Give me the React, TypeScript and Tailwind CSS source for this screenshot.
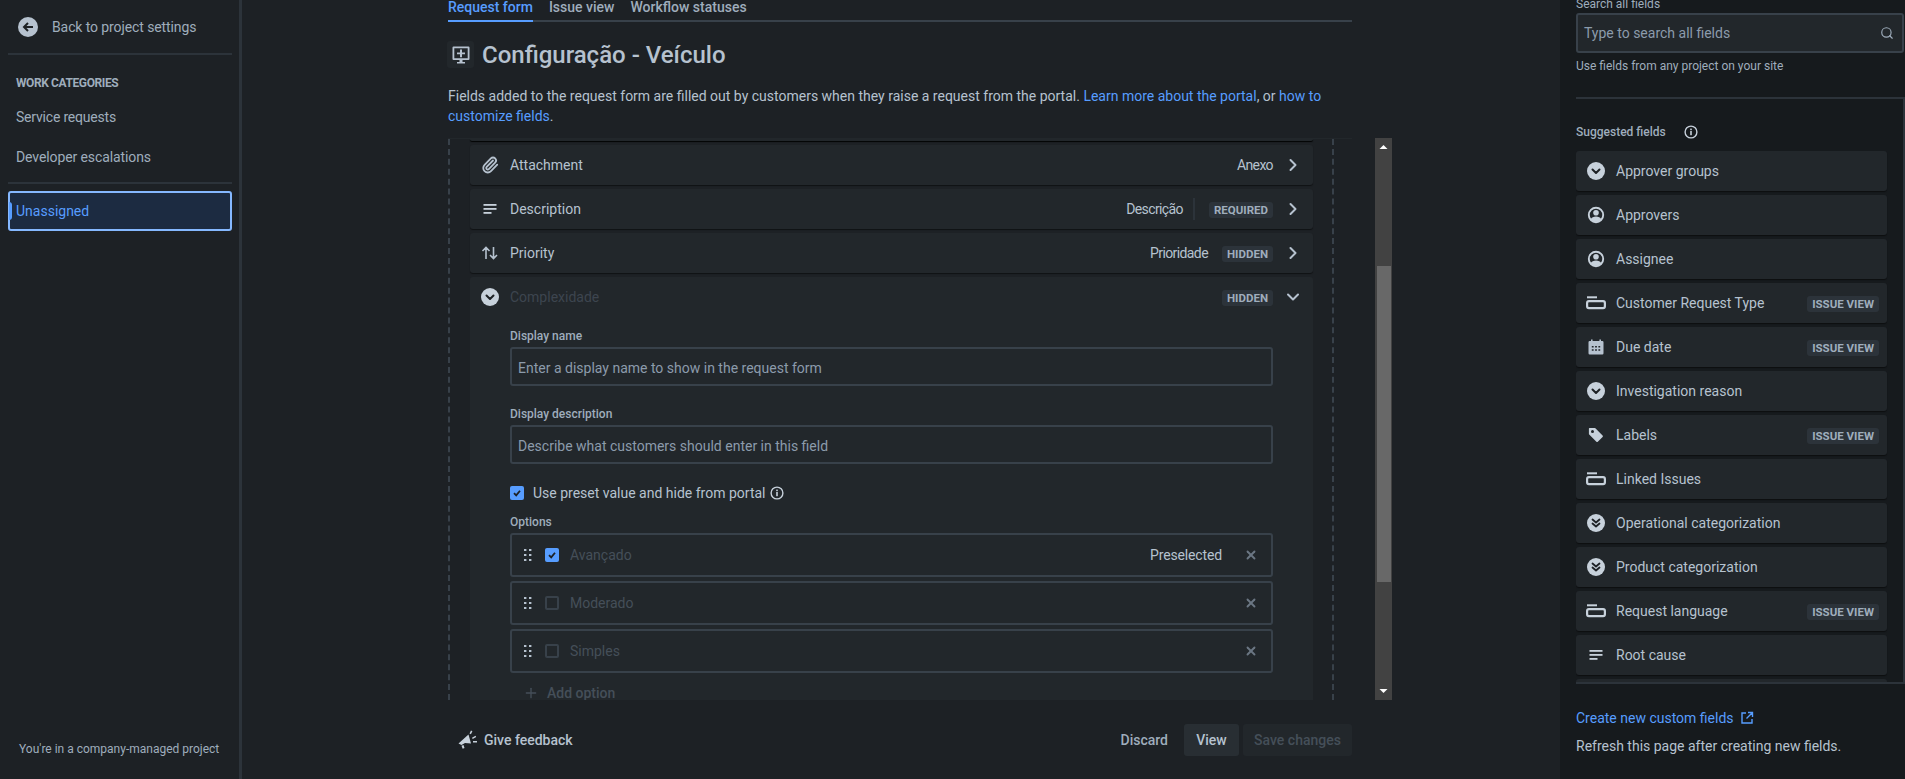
import { ReactNode } from "react";
import { ChevronDown, ChevronRight, Paperclip, Plus, Search, X } from "lucide-react";

function DropdownIcon({ double }: { double?: boolean }) {
  return (
    <svg width="20" height="20" viewBox="0 0 20 20" className="shrink-0">
      <circle cx="10" cy="10" r="9" fill="#c7d1db" />
      {double ? (
        <path d="M6.5 6.5 10 9.5l3.5-3M6.5 10.5 10 13.5l3.5-3" fill="none" stroke="#1d2125" strokeWidth="1.8" strokeLinecap="round" strokeLinejoin="round" />
      ) : (
        <path d="M6.5 8.5 10 12l3.5-3.5" fill="none" stroke="#1d2125" strokeWidth="2" strokeLinecap="round" strokeLinejoin="round" />
      )}
    </svg>
  );
}

function PersonIcon() {
  return (
    <svg width="20" height="20" viewBox="0 0 20 20" className="shrink-0">
      <circle cx="10" cy="10" r="7.2" fill="none" stroke="#c7d1db" strokeWidth="1.9" />
      <circle cx="10" cy="7.8" r="2.8" fill="#c7d1db" />
      <path d="M4.600 14.600c1-2.200 3-3 5.400-3s4.400.800 5.400 3a7.200 7.200 0 0 1-10.800 0z" fill="#c7d1db" />
    </svg>
  );
}

function ShortTextIcon() {
  return (
    <svg width="20" height="14" viewBox="0 0 20 14" className="shrink-0">
      <rect x="1" y="0.3" width="10" height="2" fill="#c7d1db" />
      <rect x="1.100" y="5.100" width="17.800" height="7" rx="1.800" fill="none" stroke="#c7d1db" strokeWidth="2.200" />
    </svg>
  );
}

function CalendarIcon() {
  return (
    <svg width="16" height="16" viewBox="0 0 16 16" className="shrink-0">
      <path fillRule="evenodd" d="M.5 3.200A1.200 1.200 0 0 1 1.700 2H3V.5h1.600V2h6.800V.5H13V2h1.300a1.200 1.200 0 0 1 1.200 1.200v11.100a1.200 1.200 0 0 1-1.200 1.200H1.700a1.200 1.200 0 0 1-1.200-1.200zM3.800 7v1.500h1.800V7zm3.300 0v1.500h1.800V7zm3.300 0v1.500h1.800V7zM3.800 10.300v1.500h1.800v-1.500zm3.300 0v1.500h1.800v-1.500zm3.300 0v1.500h1.800v-1.500z" fill="#b6c2cf" />
    </svg>
  );
}

function TagIcon() {
  return (
    <svg width="16" height="16" viewBox="0 0 16 16" className="shrink-0">
      <path fillRule="evenodd" d="M1.500 1h5.200a1 1 0 0 1 .700.300l7.200 7.200a1 1 0 0 1 0 1.400l-4.800 4.800a1 1 0 0 1-1.400 0L1.200 7.500a1 1 0 0 1-.300-.700V1.600A.600.600 0 0 1 1.500 1zM4.500 3a1.500 1.500 0 1 0 0 3 1.500 1.500 0 0 0 0-3z" fill="#c7d1db" />
    </svg>
  );
}

function LinesIcon() {
  return (
    <svg width="16" height="12" viewBox="0 0 16 12" className="shrink-0">
      <rect x="1.500" y="1" width="13" height="1.800" fill="#c7d1db" />
      <rect x="1.500" y="5" width="13" height="1.800" fill="#c7d1db" />
      <rect x="1.500" y="9" width="8" height="1.800" fill="#c7d1db" />
    </svg>
  );
}

function PriorityIcon() {
  return (
    <svg width="18" height="14" viewBox="0 0 18 14" className="shrink-0">
      <path d="M5 13V2M1.500 5 5 1.500 8.500 5M12.500 1v11M9 9l3.500 3.500L16 9" fill="none" stroke="#b6c2cf" strokeWidth="1.600" />
    </svg>
  );
}

function InfoIcon({ size = 14 }: { size?: number }) {
  return (
    <svg width={size} height={size} viewBox="0 0 14 14" className="shrink-0">
      <circle cx="7" cy="7" r="5.900" fill="none" stroke="#c7d1db" strokeWidth="1.400" />
      <rect x="6.200" y="6" width="1.600" height="4.200" fill="#c7d1db" />
      <rect x="6.200" y="3.600" width="1.600" height="1.600" fill="#c7d1db" />
    </svg>
  );
}

function Tag({ children }: { children: ReactNode }) {
  return (
    <span className="flex h-4 translate-y-px items-center rounded-[3px] bg-[#2c333a] px-[5px] text-[11.5px] font-bold uppercase text-[#9fadbc]">
      {children}
    </span>
  );
}

function Checkbox({ checked }: { checked?: boolean }) {
  return checked ? (
    <span className="flex h-[14px] w-[14px] shrink-0 items-center justify-center rounded-[2px] bg-[#579dff]">
      <svg width="10" height="10" viewBox="0 0 10 10">
        <path d="M2 5.200 4.200 7.400 8 2.800" fill="none" stroke="#1d2125" strokeWidth="1.800" />
      </svg>
    </span>
  ) : (
    <span className="block h-[14px] w-[14px] shrink-0 rounded-[2px] border-2 border-[#38414a]" />
  );
}

function DragDots() {
  return (
    <svg width="8" height="12" viewBox="0 0 8 12" className="shrink-0">
      {[0, 5, 10].map((y) => (
        <g key={y} fill="#b6c2cf">
          <rect x="0" y={y} width="2.400" height="2" />
          <rect x="5" y={y} width="2.400" height="2" />
        </g>
      ))}
    </svg>
  );
}

function FieldRow({ icon, name, value, tag, sep }: { icon: ReactNode; name: string; value?: string; tag?: string; sep?: boolean }) {
  return (
    <div className="flex h-10 items-center rounded-[3px] bg-[#22272b] shadow-[0_1px_1px_#03040480]">
      <div className="flex w-10 shrink-0 justify-center">{icon}</div>
      <span className="text-[#b6c2cf]">{name}</span>
      <div className="ml-auto flex items-center">
        {value && <span className="tracking-[-0.6px] text-[#b6c2cf]">{value}</span>}
        {sep && <span className="mx-[10px] h-[22px] w-[2px] bg-[#2c333a]" />}
        {tag && <span className={sep ? "ml-[4px]" : "ml-[14px]"}><Tag>{tag}</Tag></span>}
      </div>
      <div className="flex w-10 shrink-0 justify-center">
        <ChevronRight size={20} color="#b6c2cf" strokeWidth={2.4} />
      </div>
    </div>
  );
}

function OptionRow({ name, checked }: { name: string; checked?: boolean }) {
  return (
    <div className="flex h-11 items-center rounded-[3px] border-2 border-[#38414a] pl-[12px] pr-[13px]">
      <DragDots />
      <span className="ml-[13px]"><Checkbox checked={checked} /></span>
      <span className="ml-[11px] text-[#454f59]">{name}</span>
      {checked && <span className="ml-auto tracking-[-0.15px] text-[#b6c2cf]">Preselected</span>}
      <X size={14} color="#6b7683" strokeWidth={3.2} className={checked ? "ml-[22px]" : "ml-auto"} />
    </div>
  );
}

const suggested = [
  { name: "Approver groups", icon: <DropdownIcon /> },
  { name: "Approvers", icon: <PersonIcon /> },
  { name: "Assignee", icon: <PersonIcon /> },
  { name: "Customer Request Type", icon: <ShortTextIcon />, tag: true },
  { name: "Due date", icon: <CalendarIcon />, tag: true },
  { name: "Investigation reason", icon: <DropdownIcon /> },
  { name: "Labels", icon: <TagIcon />, tag: true },
  { name: "Linked Issues", icon: <ShortTextIcon /> },
  { name: "Operational categorization", icon: <DropdownIcon double /> },
  { name: "Product categorization", icon: <DropdownIcon double /> },
  { name: "Request language", icon: <ShortTextIcon />, tag: true },
  { name: "Root cause", icon: <LinesIcon /> },
];

export default function App() {
  return (
    <div className="flex h-screen w-full overflow-hidden bg-[#1d2125] font-['Roboto',sans-serif] text-sm text-[#b6c2cf]">
      {/* left nav */}
      <aside className="flex w-[242px] shrink-0 flex-col border-r-[3px] border-[#2c333a] pl-2 pr-[7px] text-[#9fadbc]">
        <div className="flex h-[53px] items-center gap-[14px] pl-[10px]">
          <svg width="20" height="20" viewBox="0 0 20 20">
            <circle cx="10" cy="10" r="10" fill="#b6c2cf" />
            <path d="M15 10H6.500M10 6 6 10l4 4" fill="none" stroke="#1d2125" strokeWidth="2" />
          </svg>
          <span className="tracking-[-0.1px]">Back to project settings</span>
        </div>
        <div className="h-[2px] bg-[#2c333a]" />
        <div className="pb-[6px] pl-2 pt-[20px] text-[12px] font-bold uppercase leading-4 tracking-[-0.4px] text-[#9fadbc]">Work categories</div>
        <div className="flex h-10 items-center pl-2 tracking-[-0.2px]">Service requests</div>
        <div className="flex h-10 items-center pl-2 tracking-[-0.1px]">Developer escalations</div>
        <div className="mt-[5px] h-[2px] bg-[#2c333a]" />
        <div className="relative mt-[7px] flex h-10 items-center rounded-[3px] border-2 border-[#85b8ff] bg-[#1c2b41] pl-[6px] text-[#579dff]">
          Unassigned
          <span className="absolute left-[-1px] top-[9px] h-[18px] w-[3px] rounded-r-sm bg-[#579dff]" />
        </div>
        <div className="mt-auto pb-[22px] pl-[11px] text-xs leading-4">You're in a company-managed project</div>
      </aside>

      {/* main column */}
      <main className="flex-1 overflow-hidden pl-[206px]">
        <div className="-mt-[3px] w-[904px]">
          <div className="flex gap-4 border-b-2 border-[#38414a] font-medium text-[#9fadbc]">
            <span className="-mb-[2px] border-b-2 border-[#579dff] pb-[3px] text-[#579dff]">Request form</span>
            <span className="pb-[3px]">Issue view</span>
            <span className="pb-[3px]">Workflow statuses</span>
          </div>
          <div className="-ml-px mt-[19px] flex h-[27px] items-center gap-2">
            <span className="flex h-[27px] w-[27px] items-center justify-center rounded-[3px] bg-[#22272b]">
              <svg width="20" height="20" viewBox="0 0 20 20">
                <path fillRule="evenodd" d="M2.500 1.500h15a1 1 0 0 1 1 1v11.500a1 1 0 0 1-1 1h-15a1 1 0 0 1-1-1V2.500a1 1 0 0 1 1-1zm.8 1.800v10h13.400v-10zM9 4.500h2V7.500h3v1.800h-3v3H9v-3H6V7.500h3zM8.500 15h3v2h2.500v1.500H6V17h2.500z" fill="#b6c2cf" />
              </svg>
            </span>
            <h1 className="text-2xl font-medium text-[#b6c2cf]">Configuração - Veículo</h1>
          </div>
          <p className="mt-[18px] leading-5 text-[#b6c2cf]">
            Fields added to the request form are filled out by customers when they raise a request from the portal.{" "}
            <span className="text-[#579dff]">Learn more about the portal</span>, or <span className="text-[#579dff]">how to</span>
            <br />
            <span className="text-[#579dff]">customize fields</span>.
          </p>
        </div>

        <div className="mt-3 flex h-[562px] w-[944px]">
          <div className="h-full w-[904px] overflow-hidden border-t border-[#22272b]">
            <div className="h-full w-[886px] border-x-2 border-dashed border-[#38414a] pl-5 pr-[19px]">
              <div className="h-[2px] rounded-b-[3px] bg-[#22272b] shadow-[0_1px_1px_#030404]" />
              <div className="mt-[4px] flex flex-col gap-1">
                <FieldRow icon={<Paperclip size={18} color="#b6c2cf" strokeWidth={2.4} />} name="Attachment" value="Anexo" />
                <FieldRow icon={<LinesIcon />} name="Description" value="Descrição" tag="Required" sep />
                <FieldRow icon={<PriorityIcon />} name="Priority" value="Prioridade" tag="Hidden" />
                <div className="rounded-[3px] bg-[#22272b] pb-10">
                  <div className="flex h-10 items-center">
                    <div className="flex w-10 shrink-0 justify-center"><DropdownIcon /></div>
                    <span className="text-[#3d454f]">Complexidade</span>
                    <div className="ml-auto"><Tag>Hidden</Tag></div>
                    <div className="flex w-10 shrink-0 justify-center">
                      <ChevronDown size={20} color="#b6c2cf" strokeWidth={2.4} />
                    </div>
                  </div>
                  <div className="px-10">
                    <div className="mt-[11px] text-xs font-medium leading-4 text-[#9fadbc]">Display name</div>
                    <div className="mt-[3px] flex h-[39px] items-center rounded-[3px] border-2 border-[#38414a] px-[6px] pt-[2px] text-[#8c9bab]">
                      Enter a display name to show in the request form
                    </div>
                    <div className="mt-[20px] text-xs font-medium leading-4 text-[#9fadbc]">Display description</div>
                    <div className="mt-[3px] flex h-[39px] items-center rounded-[3px] border-2 border-[#38414a] px-[6px] pt-[2px] text-[#8c9bab]">
                      Describe what customers should enter in this field
                    </div>
                    <div className="mt-[19px] flex h-5 items-center">
                      <Checkbox checked />
                      <span className="ml-[9px]">Use preset value and hide from portal</span>
                      <span className="ml-[5px]"><InfoIcon /></span>
                    </div>
                    <div className="mt-[11px] text-xs font-medium leading-4 text-[#9fadbc]">Options</div>
                    <div className="mt-[3px] flex flex-col gap-1">
                      <OptionRow name="Avançado" checked />
                      <OptionRow name="Moderado" />
                      <OptionRow name="Simples" />
                    </div>
                    <div className="mt-[10px] flex h-5 items-center gap-[8px] pl-[13px] font-medium text-[#454f59]">
                      <Plus size={16} color="#454f59" strokeWidth={2} />
                      Add option
                    </div>
                  </div>
                </div>
              </div>
            </div>
          </div>
          {/* scrollbar */}
          <div className="ml-[23px] flex h-full w-[17px] flex-col items-center bg-[#424242]">
            <svg width="17" height="17" viewBox="0 0 17 17" className="shrink-0">
              <path d="M4.500 11 8.500 7l4 4z" fill="#fff" />
            </svg>
            <div className="mt-[111px] h-[316px] w-[14px] bg-[#686868]" />
            <svg width="17" height="17" viewBox="0 0 17 17" className="mt-auto shrink-0">
              <path d="M4.500 6 8.500 10l4-4z" fill="#fff" />
            </svg>
          </div>
        </div>

        <div className="mt-6 flex h-8 w-[904px] items-center font-medium">
          <div className="flex items-center gap-[6px] pl-[10px]">
            <svg width="20" height="20" viewBox="0 0 20 20">
              <path d="M.5 13.500 10.500 4.500 13 13.500l-6-.5-3.500 2zM3.500 15.800l2-.8 1 3-1.800.7zM11.500 3.500l1.500-3 1.400.7-1.500 3zM14 7.800l3.500-2 .7 1.300-3.500 2zM15 11h4v1.500h-4z" fill="#c7d1db" />
            </svg>
            <span>Give feedback</span>
          </div>
          <span className="ml-auto text-[#9fadbc]">Discard</span>
          <span className="ml-4 flex h-8 w-[55px] items-center justify-center rounded-[3px] bg-[#282e33]">View</span>
          <span className="ml-1 flex h-8 w-[109px] items-center justify-center rounded-[3px] bg-[#22272b] text-[#454f59]">Save changes</span>
        </div>
      </main>

      {/* field library */}
      <aside className="w-[345px] shrink-0 overflow-hidden bg-[#161a1d] pl-4">
        <div className="-mt-[4px] text-xs leading-4 text-[#9fadbc]">Search all fields</div>
        <div className="mt-[1px] flex h-10 w-[328px] items-center justify-between rounded-[3px] border-2 border-[#38414a] bg-[#22272b] pl-[6px] pr-[8px] text-[#8c9bab]">
          Type to search all fields
          <Search size={14} color="#9fadbc" strokeWidth={2} />
        </div>
        <div className="mt-[5px] text-xs leading-4 text-[#9fadbc]">Use fields from any project on your site</div>

        <div className="mt-[23px] h-[587px] overflow-hidden border-y-2 border-r-2 border-[#2c333a]">
          <div className="flex items-center gap-[18px] pt-[25px] text-xs font-medium leading-4 text-[#9fadbc]">
            Suggested fields
            <InfoIcon />
          </div>
          <div className="mt-[11px] flex w-[311px] flex-col gap-1">
            {suggested.map((f) => (
              <div key={f.name} className="flex h-10 items-center rounded-[3px] bg-[#22272b] shadow-[0_1px_1px_#03040480]">
                <div className="flex w-10 shrink-0 justify-center">{f.icon}</div>
                <span>{f.name}</span>
                {f.tag && <span className="ml-auto mr-2"><Tag>Issue view</Tag></span>}
              </div>
            ))}
            <div className="h-10 rounded-[3px] bg-[#22272b]" />
          </div>
        </div>

        <div className="mt-6 flex items-center gap-[6px] leading-5 text-[#579dff]">
          Create new custom fields
          <svg width="14" height="14" viewBox="0 0 14 14">
            <path d="M6 2H2v10h10V8M8 1.500h4.500V6M12 2 6.500 7.500" fill="none" stroke="#579dff" strokeWidth="1.400" />
          </svg>
        </div>
        <div className="mt-2 leading-5">Refresh this page after creating new fields.</div>
      </aside>
    </div>
  );
}
